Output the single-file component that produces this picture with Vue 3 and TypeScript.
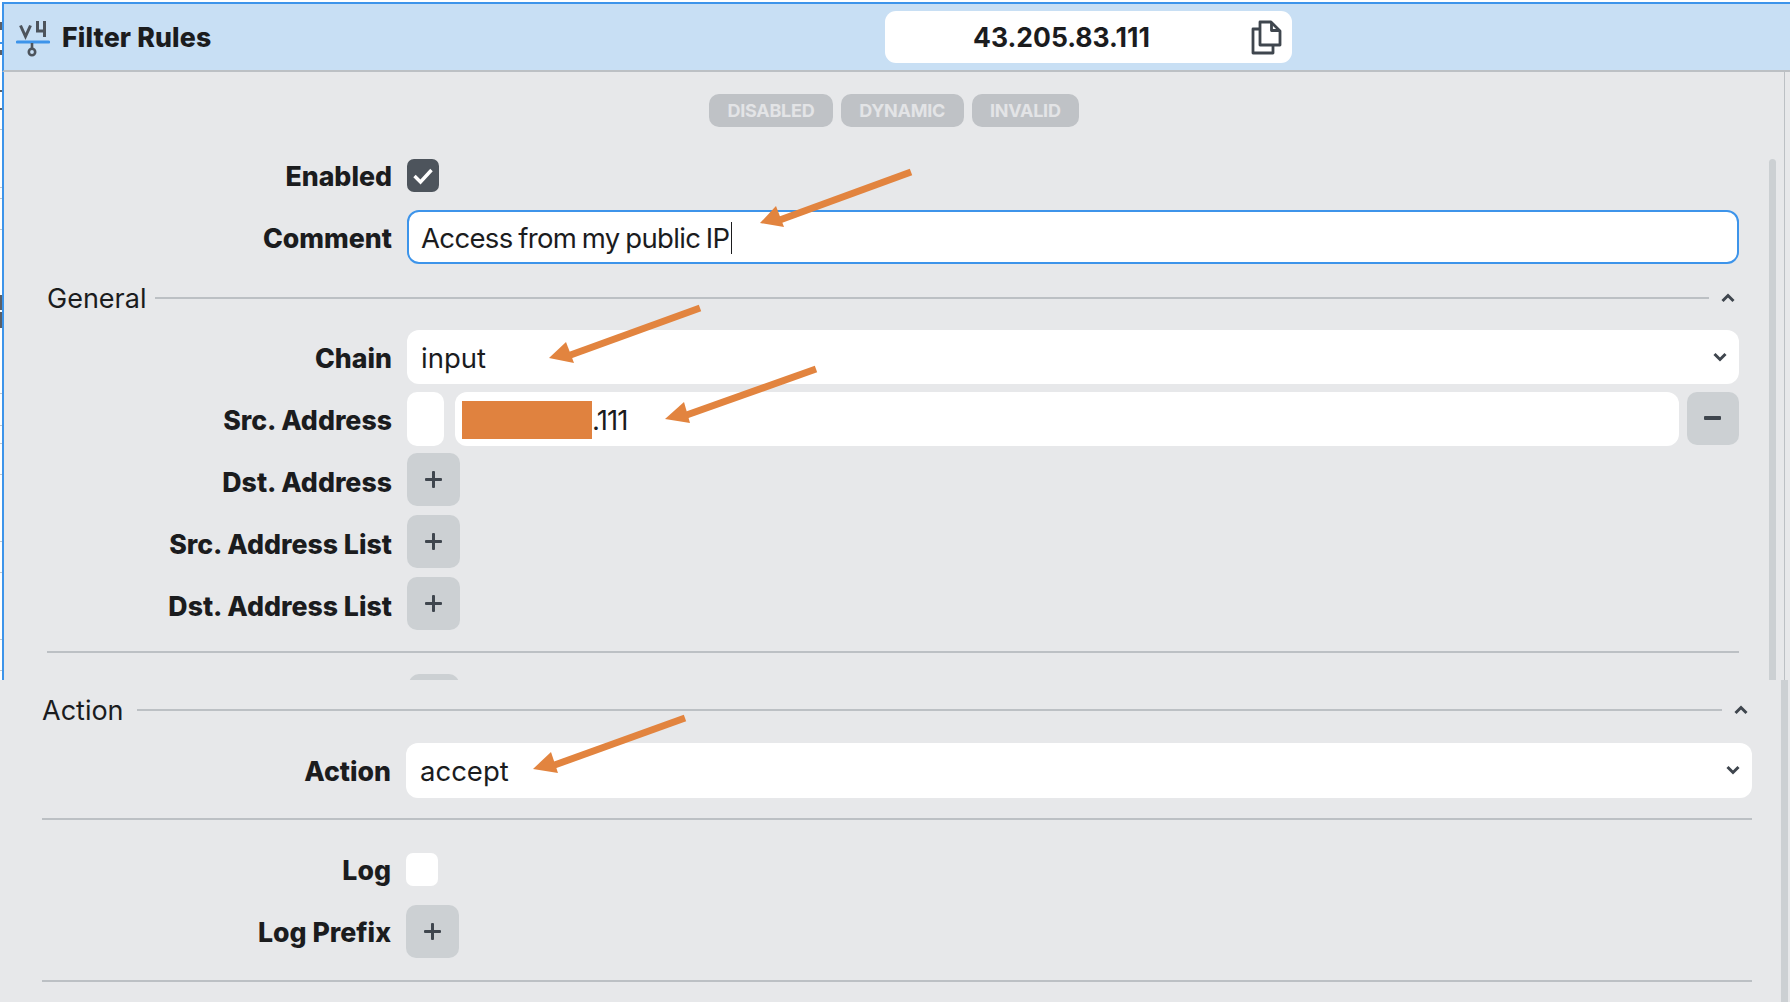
<script setup lang="ts">
interface FieldRow {
  label: string
}
interface Tick {
  top: number
  height: number
  color: string
}
const addressRows: FieldRow[] = [
  { label: 'Dst. Address' },
  { label: 'Src. Address List' },
  { label: 'Dst. Address List' },
]
const chips: string[] = ['DISABLED', 'DYNAMIC', 'INVALID']
const arrows: string[] = [
  'M911 172 L777 221',
  'M700 308 L565 357',
  'M816 369 L681 417',
  'M685 718 L549 767',
]
const heads: string[] = [
  '760,223 776,206 784,227',
  '549,358 566,342 574,363',
  '665,419 684,402 690,423',
  '533,769 551,752 558,773',
]
const dark = '#5a5f66'
const grey = '#c4c6c9'
const ticks: Tick[] = [
  { top: 22, height: 8, color: dark },
  { top: 42, height: 2, color: '#3d94ea' },
  { top: 50, height: 5, color: dark },
  { top: 90, height: 2, color: dark },
  { top: 108, height: 2, color: dark },
  { top: 129, height: 1, color: grey },
  { top: 187, height: 1, color: grey },
  { top: 198, height: 1, color: grey },
  { top: 229, height: 1, color: grey },
  { top: 295, height: 15, color: dark },
  { top: 312, height: 16, color: dark },
  { top: 393, height: 1, color: grey },
  { top: 425, height: 1, color: grey },
  { top: 443, height: 1, color: grey },
  { top: 474, height: 1, color: grey },
  { top: 541, height: 1, color: grey },
  { top: 572, height: 1, color: grey },
  { top: 639, height: 1, color: grey },
  { top: 670, height: 1, color: grey },
]
</script>

<template>
  <div class="screen">
    <header class="header">
      <div class="title">
        <svg class="v4" width="34" height="38" viewBox="0 0 34 38" fill="none">
          <path d="M4.5 5.5 L9.5 16.5 L14.5 5.5" stroke="#4d545c" stroke-width="3" />
          <path d="M21.5 1 V11 H29 M28.5 1 V17" stroke="#4d545c" stroke-width="3" />
          <path d="M1.5 22 H32.5" stroke="#3d94ea" stroke-width="3.2" stroke-linecap="round" />
          <path d="M16 23 V28.5" stroke="#4d545c" stroke-width="2.6" />
          <circle cx="16" cy="32" r="3.2" stroke="#4d545c" stroke-width="2.6" />
        </svg>
        <span>Filter Rules</span>
      </div>
      <div class="address">
        <span class="address-text">43.205.83.111</span>
        <svg class="copy" width="32" height="36" viewBox="0 0 32 36" fill="none" stroke="#3f464e" stroke-width="2.8" stroke-linejoin="round">
          <path d="M10 3 H21 L30 12 V26 H10 Z" />
          <path d="M21.5 3.5 V11.5 H29.5" />
          <path d="M10 10 H3 V34 H23 V26" />
        </svg>
      </div>
    </header>

    <section class="panel-top">
      <div class="chips">
        <span v-for="c in chips" :key="c" class="chip">{{ c }}</span>
      </div>

      <div class="row row-check">
        <label class="lbl">Enabled</label>
        <span class="check on">
          <svg width="22" height="18" viewBox="0 0 22 18" fill="none">
            <path d="M2.5 9 L8.5 15 L19.5 3" stroke="#fff" stroke-width="3.4" />
          </svg>
        </span>
      </div>
      <div class="row row-comment">
        <label class="lbl">Comment</label>
        <div class="field focus">Access from my public IP<i class="caret"></i></div>
      </div>

      <div class="group">
        <span class="group-name">General</span>
        <span class="group-line"></span>
        <svg class="chev-up" width="14" height="10" viewBox="0 0 14 10" fill="none">
          <path d="M1.5 8 L7 2.5 L12.5 8" stroke="#3f464e" stroke-width="3" />
        </svg>
      </div>

      <div class="rows">
        <div class="row">
          <label class="lbl">Chain</label>
          <div class="field select">
            input
            <svg class="chev-down" width="14" height="10" viewBox="0 0 14 10" fill="none">
              <path d="M1.5 2 L7 7.5 L12.5 2" stroke="#3f464e" stroke-width="3" />
            </svg>
          </div>
        </div>
        <div class="row">
          <label class="lbl">Src. Address</label>
          <div class="not-box"></div>
          <div class="field src"><span class="redact"></span>.111</div>
          <button class="btn minus"><i class="bar"></i></button>
        </div>
        <div v-for="r in addressRows" :key="r.label" class="row">
          <label class="lbl">{{ r.label }}</label>
          <button class="btn add"><i class="bar"></i><i class="bar vert"></i></button>
        </div>
      </div>
      <div class="rule"></div>
      <div class="peek"></div>
      <div class="scroll-top"></div>
      <div class="edge-line"></div>
    </section>

    <section class="panel-bottom">
      <div class="group">
        <span class="group-name">Action</span>
        <span class="group-line"></span>
        <svg class="chev-up" width="14" height="10" viewBox="0 0 14 10" fill="none">
          <path d="M1.5 8 L7 2.5 L12.5 8" stroke="#3f464e" stroke-width="3" />
        </svg>
      </div>
      <div class="row row-action">
        <label class="lbl">Action</label>
        <div class="field select">
          accept
          <svg class="chev-down" width="14" height="10" viewBox="0 0 14 10" fill="none">
            <path d="M1.5 2 L7 7.5 L12.5 2" stroke="#3f464e" stroke-width="3" />
          </svg>
        </div>
      </div>
      <div class="rule rule-a"></div>
      <div class="row row-log">
        <label class="lbl">Log</label>
        <span class="check"></span>
      </div>
      <div class="row row-prefix">
        <label class="lbl">Log Prefix</label>
        <button class="btn"><i class="bar"></i><i class="bar vert"></i></button>
      </div>
      <div class="rule rule-b"></div>
      <div class="scroll-bottom"></div>
    </section>

    <i
      v-for="t in ticks"
      :key="t.top"
      class="tick"
      :style="{ top: t.top + 'px', height: t.height + 'px', background: t.color }"
    ></i>

    <svg class="arrows" width="1790" height="1002" viewBox="0 0 1790 1002" fill="none">
      <path v-for="a in arrows" :key="a" :d="a" stroke="#e2843f" stroke-width="7" />
      <polygon v-for="h in heads" :key="h" :points="h" fill="#e2843f" />
    </svg>
  </div>
</template>

<style>
html, body { margin: 0; background: #fff; }
</style>

<style scoped>
.screen {
  position: relative;
  width: 1790px;
  height: 1002px;
  overflow: hidden;
  font-family: Inter, "Liberation Sans", sans-serif;
  color: #1b1c1e;
  background: #fff;
  display: flex;
  flex-direction: column;
}
.header {
  margin: 2px 0 0 2px;
  height: 66px;
  flex: none;
  background: #c8dff4;
  border-top: 2px solid #3d94ea;
  border-left: 2px solid #3d94ea;
  border-bottom: 2px solid #bcc0c4;
  display: flex;
  align-items: center;
  position: relative;
}
.title {
  display: flex;
  align-items: center;
  gap: 12px;
  margin-left: 12px;
  font-size: 26.7px;
  font-weight: 800;
  letter-spacing: 0.15px;
}
.v4 { margin-top: 4px; flex: none; }
.address {
  position: absolute;
  left: 881px;
  top: 7px;
  width: 407px;
  height: 52px;
  background: #fff;
  border-radius: 11px;
  display: flex;
  align-items: center;
}
.address-text {
  margin-left: 88px;
  font-size: 26.5px;
  font-weight: 700;
}
.copy { position: absolute; left: 365px; top: 8px; }
.panel-top {
  position: relative;
  height: 608px;
  flex: none;
  margin-left: 2px;
  box-sizing: border-box;
  background: #e7e8ea;
  border-left: 2px solid #3d94ea;
  overflow: hidden;
}
.chips {
  display: flex;
  justify-content: flex-start;
  gap: 8px;
  padding: 22px 0 0 705px;
}
.chip {
  height: 33px;
  padding: 0 18.4px;
  border-radius: 10px;
  background: #bfc2c6;
  color: #e3e4e6;
  font-size: 18px;
  font-weight: 700;
  line-height: 33px;
  letter-spacing: -0.25px;
}
.row {
  display: flex;
  align-items: center;
  gap: 8px;
  height: 54px;
}
.lbl {
  width: 388px;
  margin: 1px 7px 0 0;
  box-sizing: border-box;
  text-align: right;
  font-size: 26.7px;
  font-weight: 800;
  flex: none;
}
.row-check { height: 33px; margin-top: 32px; }
.row-comment { margin-top: 18px; }
.check {
  width: 32px;
  height: 33px;
  border-radius: 7px;
  background: #fff;
  display: flex;
  align-items: center;
  justify-content: center;
  flex: none;
}
.check.on { background: #4d545c; }
.field {
  position: relative;
  width: 1332px;
  height: 54px;
  box-sizing: border-box;
  background: #fff;
  border-radius: 12px;
  display: flex;
  align-items: center;
  padding: 1px 0 0 14px;
  font-size: 27.5px;
  font-weight: 400;
  word-spacing: -5px;
  flex: none;
}
.focus {
  border: 2px solid #3d94ea;
  padding-left: 12px;
  letter-spacing: -0.65px;
  word-spacing: -1.5px;
}
.caret {
  display: inline-block;
  width: 1.5px;
  height: 32px;
  margin-left: 1px;
  background: #1b1c1e;
}
.group {
  display: flex;
  align-items: center;
  margin: 19px 0 0 43px;
  height: 30px;
}
.group-name { font-size: 27px; font-weight: 400; }
.group-line { flex: none; width: 1554px; height: 2px; background: #bcc0c4; margin-left: 9px; }
.chev-up { margin-left: 12px; flex: none; }
.rows {
  display: flex;
  flex-direction: column;
  gap: 8px;
  margin-top: 17px;
}
.select .chev-down { position: absolute; right: 12px; top: 22px; }
.not-box {
  width: 37px;
  height: 54px;
  background: #fff;
  border-radius: 10px;
  margin-right: 3px;
  flex: none;
}
.src { width: 1224px; padding-left: 7px; letter-spacing: -0.9px; }
.redact { width: 130px; height: 38px; background: #e0823f; flex: none; }
.btn {
  position: relative;
  width: 53px;
  height: 53px;
  padding: 0;
  border: 0;
  border-radius: 10px;
  background: #ccd0d3;
  flex: none;
}
.add { align-self: flex-start; margin-top: -1px; }
.minus { width: 52px; margin-top: -2px; }
.bar {
  position: absolute;
  left: 50%;
  top: 50%;
  width: 17px;
  height: 3.5px;
  margin: -2px 0 0 -9px;
  background: #3f464e;
  border-radius: 1px;
}
.bar.vert { width: 3.5px; height: 17px; margin: -9px 0 0 -2px; }
.rule {
  height: 2px;
  margin: 19px 0 0 43px;
  width: 1692px;
  background: #bcc0c4;
}
.peek {
  width: 50px;
  height: 53px;
  margin: 21px 0 0 405px;
  background: #ccd0d3;
  border-radius: 10px;
}
.scroll-top {
  position: absolute;
  left: 1765px;
  top: 87px;
  width: 7px;
  height: 540px;
  background: #ccd0d3;
  border-radius: 4px;
}
.edge-line {
  position: absolute;
  left: 1780px;
  top: 0;
  bottom: 0;
  width: 1px;
  background: #bcc0c4;
}
.panel-bottom {
  position: relative;
  flex: 1;
  background: #e7e8ea;
}
.panel-bottom .group { margin: 15px 0 0 42px; }
.panel-bottom .group-line { width: 1585px; margin-left: 13px; }
.panel-bottom .lbl { width: 391px; margin-right: 7px; }
.panel-bottom .field { width: 1346px; height: 55px; }
.row-action { margin-top: 18px; height: 55px; }
.rule-a { width: 1710px; margin: 20px 0 0 42px; }
.row-log { height: 33px; margin-top: 33px; }
.row-prefix { margin-top: 19px; height: 53px; }
.rule-b { width: 1710px; margin: 22px 0 0 42px; }
.scroll-bottom {
  position: absolute;
  left: 1781px;
  top: 0;
  bottom: 0;
  width: 7px;
  background: #ccd0d3;
}
.tick { position: absolute; left: 0; width: 2px; }
.arrows { position: absolute; left: 0; top: 0; pointer-events: none; }
</style>
